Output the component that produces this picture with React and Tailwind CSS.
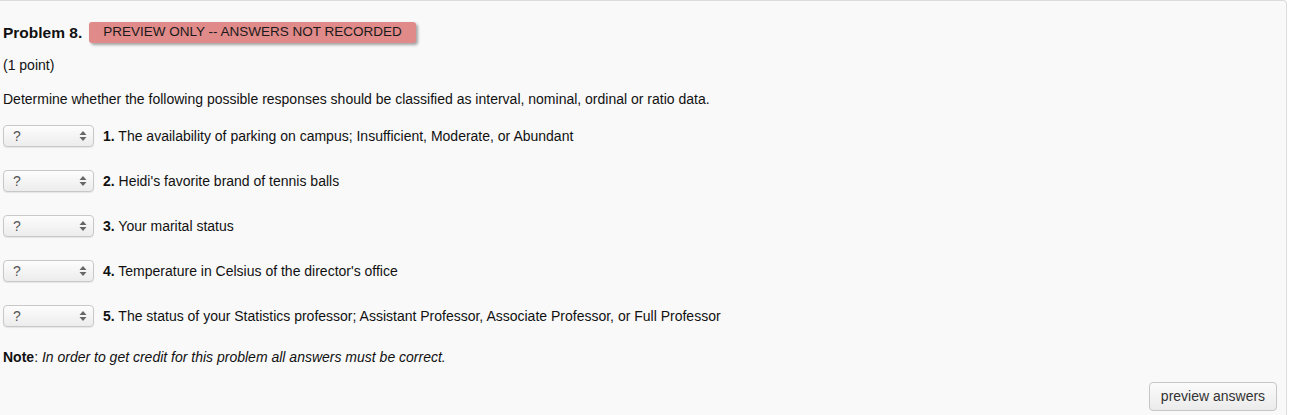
import React from 'react';

const items = [
  'The availability of parking on campus; Insufficient, Moderate, or Abundant',
  "Heidi's favorite brand of tennis balls",
  'Your marital status',
  "Temperature in Celsius of the director's office",
  'The status of your Statistics professor; Assistant Professor, Associate Professor, or Full Professor',
];

function FakeSelect() {
  return (
    <div className="w-[91px] h-[22px] rounded-[4px] border border-[#c8c8c8] bg-gradient-to-b from-[#fdfdfd] to-[#ececec] flex items-center justify-between pl-[9px] pr-[6px] shadow-[0_1px_1px_rgba(0,0,0,0.08)]">
      <span className="text-[14px] text-[#555]">?</span>
      <svg width="8" height="12" viewBox="0 0 8 12" className="text-[#666]">
        <path d="M4 1 L7.5 5 H0.5 Z" fill="currentColor" />
        <path d="M4 11 L7.5 7 H0.5 Z" fill="currentColor" />
      </svg>
    </div>
  );
}

export default function App() {
  return (
    <div className="w-[1289px] h-[415px] bg-white font-['Liberation_Sans',Arial,sans-serif] text-[#111]">
      <div className="w-[1287px] h-[415px] bg-[#f9f9f9] border-t border-r border-[#dcdcdc] rounded-tr-[4px] pl-[3px] pr-[9px]">
        <div className="flex items-center pt-[20px] h-[43px]">
          <span className="text-[15.5px] font-bold">Problem 8.</span>
          <span className="ml-[7px] h-[21px] px-[14px] flex items-center bg-[#e08a89] rounded-[3px] shadow-[2px_2px_3px_rgba(0,0,0,0.35)] text-[13.5px] text-[#1a1a1a]">
            PREVIEW ONLY -- ANSWERS NOT RECORDED
          </span>
        </div>
        <p className="text-[14px] mt-[13px] leading-[16px]">(1 point)</p>
        <p className="text-[14px] mt-[18px] leading-[16px]">
          Determine whether the following possible responses should be classified as interval, nominal, ordinal or ratio data.
        </p>
        <div className="mt-[18px] flex flex-col gap-[23px]">
          {items.map((t, i) => (
            <div key={i} className="flex items-center h-[22px]">
              <FakeSelect />
              <span className="ml-[9px] text-[14px] leading-[16px]">
                <b>{i + 1}.</b> {t}
              </span>
            </div>
          ))}
        </div>
        <p className="text-[14px] mt-[22px] leading-[16px]">
          <b>Note</b>: <i>In order to get credit for this problem all answers must be correct.</i>
        </p>
        <div className="flex justify-end mt-[17px]">
          <button className="w-[128px] h-[29px] rounded-[4px] border border-[#c6c6c6] bg-gradient-to-b from-[#fbfbfb] to-[#ebebeb] text-[14px] text-[#333]">
            preview answers
          </button>
        </div>
      </div>
    </div>
  );
}
